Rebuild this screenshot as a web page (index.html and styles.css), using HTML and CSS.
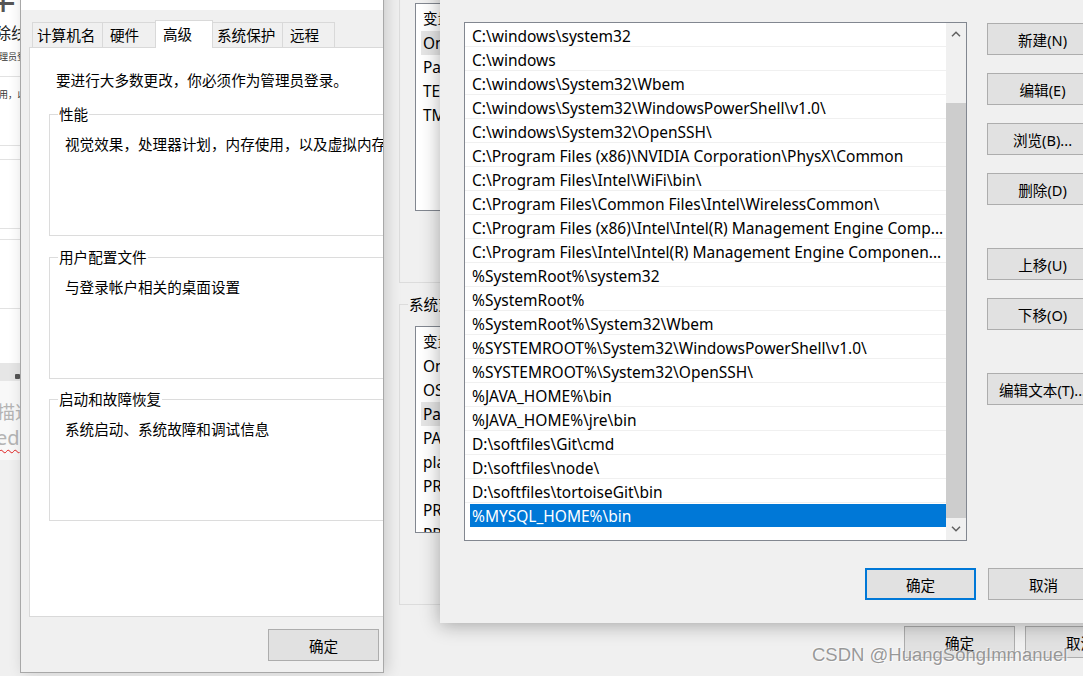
FILE: index.html
```html
<!DOCTYPE html>
<html lang="zh-CN">
<head>
<meta charset="utf-8">
<title>编辑环境变量</title>
<link rel="stylesheet" href="styles.css">
</head>
<body>
<div class="desk">

  <!-- background window strip on the far left -->
  <div class="win strip">
    <div class="st-top">
      <div class="st-glyph">子</div>
      <div class="st-big">除线</div>
      <div class="st-small">理员登录</div>
      <div class="st-rule r1"></div>
      <div class="st-small s2">用，以</div>
      <div class="st-rule r2"></div>
      <div class="st-rule r3"></div>
      <div class="st-rule r4"></div>
      <div class="st-rule r5"></div>
      <div class="st-rule r6"></div>
    </div>
    <div class="st-bar"><span class="st-ico"></span></div>
    <div class="st-lower">
      <div class="st-gray">描述</div>
      <div class="st-ed">ed</div>
    </div>
  </div>

  <!-- System Properties -->
  <div class="win sysprops">
    <div class="sp-title"></div>
    <div class="sp-body">
      <div class="tabs">
        <div class="tab t1">计算机名</div>
        <div class="tab t2">硬件</div>
        <div class="tab sel">高级</div>
        <div class="tab t4">系统保护</div>
        <div class="tab t5">远程</div>
      </div>
      <div class="sp-panel">
        <p class="sp-note">要进行大多数更改，你必须作为管理员登录。</p>
        <div class="group g1">
          <div class="legend">性能</div>
          <p class="gtext">视觉效果，处理器计划，内存使用，以及虚拟内存</p>
        </div>
        <div class="group g2">
          <div class="legend">用户配置文件</div>
          <p class="gtext">与登录帐户相关的桌面设置</p>
        </div>
        <div class="group g3">
          <div class="legend">启动和故障恢复</div>
          <p class="gtext">系统启动、系统故障和调试信息</p>
        </div>
      </div>
      <div class="sp-actions"><button class="btn">确定</button></div>
    </div>
  </div>

  <!-- Environment Variables -->
  <div class="win envvars">
    <div class="egroup eg1">
      <div class="elist el1">
        <div class="ehead">变量</div>
        <div class="erow hl">OneDrive</div>
        <div class="erow">Path</div>
        <div class="erow">TEMP</div>
        <div class="erow">TMP</div>
      </div>
    </div>
    <div class="egroup eg2">
      <div class="legend elegend">系统变量</div>
      <div class="elist el2">
        <div class="ehead">变量</div>
        <div class="erow">OnlineServices</div>
        <div class="erow">OS</div>
        <div class="erow hl">Path</div>
        <div class="erow">PATHEXT</div>
        <div class="erow">platformcode</div>
        <div class="erow">PROCESSOR_ARCHITECTURE</div>
        <div class="erow">PROCESSOR_IDENTIFIER</div>
        <div class="erow">PROCESSOR_LEVEL</div>
      </div>
    </div>
    <div class="e-actions">
      <button class="btn">确定</button>
      <button class="btn">取消</button>
    </div>
  </div>

  <!-- Edit environment variable -->
  <div class="win editvar">
    <div class="ev-main">
      <div class="plist">
        <div class="prows">
          <div class="prow">C:\windows\system32</div>
          <div class="prow">C:\windows</div>
          <div class="prow">C:\windows\System32\Wbem</div>
          <div class="prow">C:\windows\System32\WindowsPowerShell\v1.0\</div>
          <div class="prow">C:\windows\System32\OpenSSH\</div>
          <div class="prow">C:\Program Files (x86)\NVIDIA Corporation\PhysX\Common</div>
          <div class="prow">C:\Program Files\Intel\WiFi\bin\</div>
          <div class="prow">C:\Program Files\Common Files\Intel\WirelessCommon\</div>
          <div class="prow">C:\Program Files (x86)\Intel\Intel(R) Management Engine Comp...</div>
          <div class="prow">C:\Program Files\Intel\Intel(R) Management Engine Componen...</div>
          <div class="prow">%SystemRoot%\system32</div>
          <div class="prow">%SystemRoot%</div>
          <div class="prow">%SystemRoot%\System32\Wbem</div>
          <div class="prow">%SYSTEMROOT%\System32\WindowsPowerShell\v1.0\</div>
          <div class="prow">%SYSTEMROOT%\System32\OpenSSH\</div>
          <div class="prow">%JAVA_HOME%\bin</div>
          <div class="prow">%JAVA_HOME%\jre\bin</div>
          <div class="prow">D:\softfiles\Git\cmd</div>
          <div class="prow">D:\softfiles\node\</div>
          <div class="prow">D:\softfiles\tortoiseGit\bin</div>
          <div class="prow sel"><span>%MYSQL_HOME%\bin</span></div>
        </div>
        <div class="vscroll">
          <div class="sb-btn sb-up"><svg width="10" height="6" viewBox="0 0 10 6"><polyline points="1,5.2 5,1.2 9,5.2" fill="none" stroke="#606060" stroke-width="1.5"/></svg></div>
          <div class="sb-gap"></div>
          <div class="sb-thumb"></div>
          <div class="sb-btn sb-down"><svg width="10" height="6" viewBox="0 0 10 6"><polyline points="1,0.8 5,4.8 9,0.8" fill="none" stroke="#606060" stroke-width="1.5"/></svg></div>
        </div>
      </div>
      <div class="ev-side">
        <button class="btn sb1">新建(N)</button>
        <button class="btn sb2">编辑(E)</button>
        <button class="btn sb2">浏览(B)...</button>
        <button class="btn sb2">删除(D)</button>
        <button class="btn sb3">上移(U)</button>
        <button class="btn sb2">下移(O)</button>
        <button class="btn sb3">编辑文本(T)...</button>
      </div>
    </div>
    <div class="ev-actions">
      <button class="btn default">确定</button>
      <button class="btn">取消</button>
    </div>
  </div>

  <div class="watermark">CSDN @HuangSongImmanuel</div>
</div>
</body>
</html>
```

FILE: styles.css
```css
* { box-sizing: border-box; }

html, body {
  margin: 0;
  padding: 0;
}

body {
  width: 1083px;
  height: 676px;
  overflow: hidden;
  background: #f0f0f0;
  font-family: "Noto Sans", "Noto Sans CJK SC", sans-serif;
  font-size: 14.6px;
  color: #000;
}

.desk {
  position: relative;
  width: 1083px;
  height: 676px;
  overflow: hidden;
}

.win {
  position: absolute;
  overflow: hidden;
}

p { margin: 0; }

.btn {
  display: flex;
  align-items: center;
  justify-content: center;
  width: 111px;
  height: 32px;
  padding: 0;
  margin: 0;
  background: #e1e1e1;
  border: 1px solid #adadad;
  font-family: "Noto Sans", "Noto Sans CJK SC", sans-serif;
  font-size: 14.6px;
  color: #000;
  white-space: nowrap;
  flex: none;
}

/* ---------- left background strip ---------- */
.strip {
  left: 0;
  top: 0;
  width: 21px;
  height: 676px;
  background: #f0f0f0;
  z-index: 0;
}
.st-top {
  height: 363px;
  background: #fff;
  font-family: "Noto Sans CJK SC", sans-serif;
}
.st-glyph {
  height: 12px;
  overflow: hidden;
  font-size: 24px;
  line-height: 4px;
  font-weight: bold;
  color: #555;
  margin-left: -9px;
}
.st-big {
  margin-top: 10px;
  margin-left: -5px;
  font-size: 16px;
  line-height: 20px;
  white-space: nowrap;
  color: #222;
}
.st-small {
  margin-top: 9px;
  margin-left: -1px;
  font-size: 9px;
  line-height: 12px;
  white-space: nowrap;
  color: #333;
}
.st-small.s2 { margin-top: 12px; }
.st-rule { height: 1px; background: #e2e2e2; }
.st-rule.r1 { margin-top: 13px; }
.st-rule.r2 { margin-top: 44px; }
.st-rule.r3 { margin-top: 13px; }
.st-rule.r4 { margin-top: 68px; }
.st-rule.r5 { margin-top: 10px; }
.st-rule.r6 { margin-top: 68px; }
.st-bar {
  height: 18px;
  background: #e6e6e6;
  display: flex;
  align-items: flex-end;
  justify-content: flex-end;
  padding: 0 1px 2px 0;
}
.st-ico {
  width: 5px;
  height: 5px;
  background: #555;
  border-radius: 1px;
}
.st-lower {
  height: 79px;
  background: #f8f8f8;
  font-family: "Noto Sans CJK SC", sans-serif;
  white-space: nowrap;
}
.st-gray {
  padding-top: 19px;
  margin-left: -3px;
  font-size: 18px;
  line-height: 22px;
  color: #b4b4b4;
}
.st-ed {
  margin-top: 4px;
  margin-left: -4px;
  font-family: "Noto Sans", sans-serif;
  font-size: 20px;
  line-height: 24px;
  color: #b4b4b4;
  text-decoration: underline wavy #e02020;
  text-decoration-thickness: 1px;
  text-underline-offset: 4px;
}

/* ---------- System properties ---------- */
.sysprops {
  left: 20px;
  top: -30px;
  width: 364px;
  height: 703px;
  border: 1px solid #a8a8a8;
  background: #f0f0f0;
  z-index: 2;
  box-shadow: 3px 0 14px rgba(0, 0, 0, 0.16);
}
.sp-title {
  height: 39px;
  background: #fff;
}
.sp-body {
  padding: 10px 0 0 8px;
}
.tabs {
  display: flex;
  align-items: flex-end;
  height: 27px;
  padding-left: 3px;
  font-family: "Noto Sans CJK SC", sans-serif;
}
.tab {
  height: 25px;
  display: flex;
  align-items: center;
  justify-content: flex-start;
  border-top: 1px solid #d9d9d9;
  background: #f0f0f0;
  white-space: nowrap;
  padding-bottom: 1px;
}
.tab.t1 { width: 70px; padding-left: 4px; border-left: 1px solid #d9d9d9; }
.tab.t2 { width: 53px; padding-left: 7px; border-left: 1px solid #d9d9d9; }
.tab.sel {
  position: relative;
  z-index: 1;
  width: 58px;
  height: 28px;
  margin-bottom: -1px;
  padding-left: 7px;
  background: #fff;
  border-left: 1px solid #d9d9d9;
  border-right: 1px solid #d9d9d9;
  padding-bottom: 2px;
}
.tab.t4 { width: 70px; padding-left: 4px; border-right: 1px solid #d9d9d9; }
.tab.t5 { width: 52px; padding-left: 7px; border-right: 1px solid #d9d9d9; }

.sp-panel {
  width: 400px;
  height: 570px;
  background: #fff;
  border: 1px solid #d9d9d9;
  padding: 0 0 0 19px;
  font-family: "Noto Sans CJK SC", sans-serif;
}
.sp-note {
  margin: 22px 0 0 7px;
  line-height: 20px;
  white-space: nowrap;
}
.group {
  width: 400px;
  height: 122px;
  border: 1px solid #dcdcdc;
}
.group.g1 { margin-top: 24px; }
.group.g2 { margin-top: 21px; }
.group.g3 { margin-top: 20px; }
.legend {
  display: table;
  margin: -9px 0 0 8px;
  padding: 0 1px;
  line-height: 16px;
  background: #fff;
  white-space: nowrap;
}
.gtext {
  margin: 12px 0 0 15px;
  line-height: 20px;
  white-space: nowrap;
}
.sp-actions {
  margin-top: 12px;
  padding-left: 239px;
}

/* ---------- Environment variables ---------- */
.envvars {
  left: 384px;
  top: -40px;
  width: 760px;
  height: 760px;
  background: #f0f0f0;
  padding: 20px 0 0 15px;
  z-index: 1;
}
.egroup {
  width: 700px;
  border: 1px solid #dcdcdc;
  padding-left: 15px;
}
.eg1 { height: 303px; padding-top: 22px; }
.eg2 { height: 301px; margin-top: 21px; }
.legend.elegend {
  margin-left: -7px;
  background: #f0f0f0;
  font-family: "Noto Sans CJK SC", sans-serif;
}
.elist {
  width: 600px;
  background: #fff;
  border: 1px solid #828790;
  overflow: hidden;
  font-size: 15.4px;
}
.el1 { height: 208px; }
.el2 { height: 207px; margin-top: 14px; }
.ehead {
  height: 27px;
  padding-left: 7px;
  line-height: 27px;
  font-family: "Noto Sans CJK SC", sans-serif;
  font-size: 14.6px;
}
.erow {
  height: 24px;
  padding: 1px 0 0 7px;
  line-height: 23px;
  white-space: nowrap;
}
.erow.hl {
  background: linear-gradient(to right, #fff 5px, #e5e5e5 5px);
}
.e-actions {
  display: flex;
  gap: 10px;
  margin-top: 21px;
  padding-left: 505px;
}

/* ---------- Edit environment variable ---------- */
.editvar {
  left: 440px;
  top: -30px;
  width: 680px;
  height: 653px;
  background: #f0f0f0;
  padding: 52px 0 0 24px;
  z-index: 3;
  overflow: visible;
  box-shadow: 0 2px 18px rgba(0, 0, 0, 0.32);
}
.ev-main {
  display: flex;
  align-items: flex-start;
}
.plist {
  display: flex;
  width: 503px;
  height: 519px;
  background: #fff;
  border: 1px solid #828790;
  flex: none;
}
.prows {
  width: 481px;
  flex: none;
  overflow: hidden;
}
.prow {
  height: 24px;
  padding: 3px 0 0 7px;
  line-height: 20px;
  border-bottom: 1px solid #f0f0f0;
  font-size: 15.5px;
  white-space: nowrap;
  overflow: hidden;
  text-overflow: ellipsis;
}
.prow.sel {
  margin-top: 1px;
  padding-top: 2px;
  border-bottom-color: #fff;
  color: #fff;
  background: linear-gradient(to right, #fff 5px, #0078d7 5px);
}
.vscroll {
  width: 20px;
  flex: none;
  display: flex;
  flex-direction: column;
  background: #f0f0f0;
}
.sb-btn {
  display: flex;
  align-items: center;
  justify-content: center;
}
.sb-up { height: 21px; }
.sb-gap { height: 59px; }
.sb-thumb { height: 415px; background: #cdcdcd; }
.sb-down { height: 22px; }

.ev-side {
  display: flex;
  flex-direction: column;
  margin-left: 20px;
}
.ev-side .sb1 { margin-top: 1px; }
.ev-side .sb2 { margin-top: 18px; }
.ev-side .sb3 { margin-top: 43px; }

.ev-actions {
  display: flex;
  gap: 12px;
  margin-top: 27px;
  padding-left: 401px;
}
.btn.default {
  border: 2px solid #0078d7;
}

/* ---------- watermark ---------- */
.watermark {
  position: absolute;
  left: 812px;
  top: 646px;
  z-index: 5;
  font-family: "Liberation Sans", Arial, sans-serif;
  font-size: 18.5px;
  line-height: 18.5px;
  white-space: nowrap;
  color: rgba(135, 135, 135, 0.85);
  text-shadow: 1px 1px 0 rgba(255, 255, 255, 0.7), -1px -1px 0 rgba(255, 255, 255, 0.4);
}
```
